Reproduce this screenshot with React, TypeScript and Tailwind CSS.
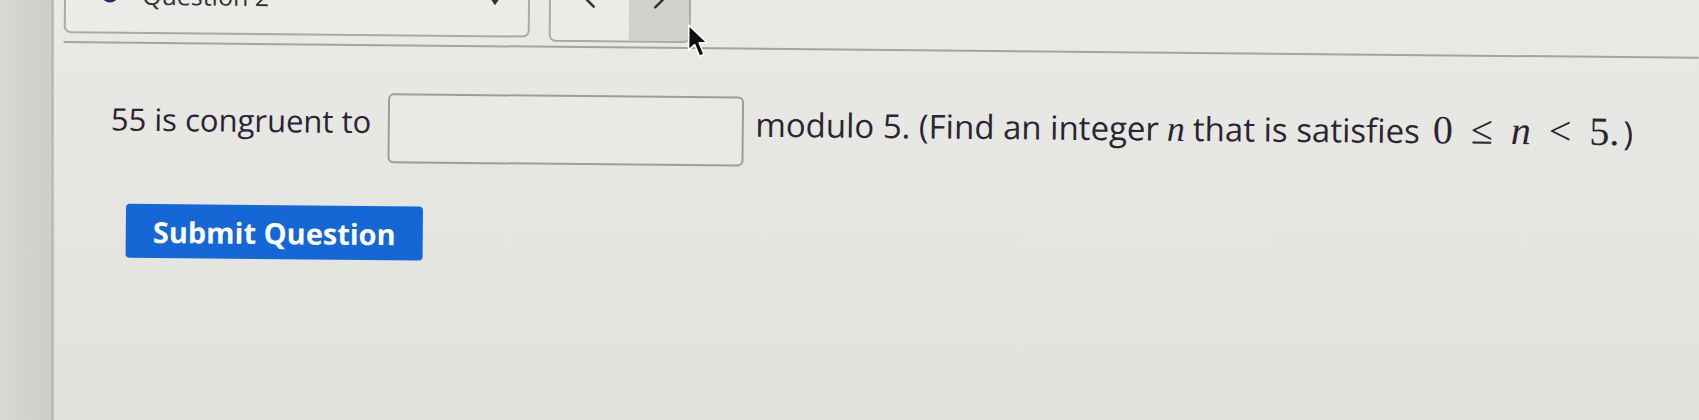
import React from "react";

function Cursor() {
  return (
    <svg width="24" height="36" viewBox="0 0 24 36" className="absolute left-[633px] top-[17px]">
      <path d="M2 2 L2 27 L8 21.5 L13 33 L17.5 31 L12.5 19.5 L20.5 19.5 Z" fill="#111" stroke="#fff" strokeWidth="1.6" strokeLinejoin="round" />
    </svg>
  );
}

export default function App() {
  return (
    <div className="flex h-[420px] w-[1699px] overflow-hidden bg-linear-to-b from-[#e9e9e5] to-[#e2e2dd] font-['Open_Sans',sans-serif] text-[#2a2433]">
      <div className="w-[54px] shrink-0 bg-linear-to-r from-[#d8d8d5] to-[#cdcdca] border-r-[3px] border-[#bcbcb8]" />
      <div className="relative flex-1 origin-top-left rotate-[0.55deg]">
        <div className="flex h-[41px] items-start">
          <div className="ml-[10px] -mt-[20px] flex h-[53px] w-[466px] items-start rounded-[7px] border-2 border-[#a9a9a5] bg-[#ebebe7] pl-[36px] pr-[26px] pt-[0px]">
            <span className="mt-[4px] h-[16px] w-[16px] rounded-full bg-[#1c2a6c]" />
            <span className="ml-[24px] text-[25px] leading-[24px] text-[#333]">Question 2</span>
            <svg width="14" height="12" viewBox="0 0 14 12" className="ml-auto mt-[9px]">
              <path d="M0 0 L14 0 L7 10 Z" fill="#333" />
            </svg>
          </div>
          <div className="ml-[19px] -mt-[20px] flex h-[57px] w-[142px] overflow-hidden rounded-[7px] border-2 border-[#a9a9a5]">
            <div className="flex w-[78px] justify-center bg-[#ebebe7]">
              <svg width="30" height="30" viewBox="0 0 24 24" fill="none" stroke="#333" strokeWidth="2" strokeLinecap="round" strokeLinejoin="round" className="-mt-[3px]">
                <path d="m15 18-6-6 6-6" />
              </svg>
            </div>
            <div className="flex flex-1 justify-center bg-[#d0d1cd]">
              <svg width="30" height="30" viewBox="0 0 24 24" fill="none" stroke="#333" strokeWidth="2" strokeLinecap="round" strokeLinejoin="round" className="-mt-[3px]">
                <path d="m9 18 6-6-6-6" />
              </svg>
            </div>
          </div>
        </div>
        <div className="ml-[10px] h-[2px] bg-[#a3a39f]" />

        <div className="mt-[47px] flex items-center pl-[58px] leading-[40px]">
          <span className="mb-[15px] whitespace-nowrap text-[31px] font-medium">55 is congruent to</span>
          <div className="ml-[17px] mr-[11px] h-[70px] w-[356px] shrink-0 rounded-[6px] border-2 border-[#9d9d9a] bg-[#e9e9e5]" />
          <span className="mb-[15px] flex items-baseline whitespace-nowrap text-[33px] font-medium">
            <span>modulo 5. (Find an integer</span>
            <span className="mx-[8px] font-['Liberation_Serif',serif] text-[36px] italic">n</span>
            <span>that is satisfies</span>
            <span className="ml-[13px] font-['Liberation_Serif',serif] text-[40px]">0</span>
            <span className="mx-[18px] font-['Liberation_Serif',serif] text-[40px]">≤</span>
            <span className="font-['Liberation_Serif',serif] text-[40px] italic">n</span>
            <span className="mx-[18px] font-['Liberation_Serif',serif] text-[40px]">&lt;</span>
            <span className="font-['Liberation_Serif',serif] text-[40px]">5.</span>
            <span className="ml-[4px]">)</span>
          </span>
        </div>

        <button className="ml-[74px] mt-[43px] flex h-[54px] w-[297px] items-center justify-center rounded-[4px] bg-[#1567d6] text-[29px] font-bold leading-none text-white">
          Submit Question
        </button>

        <Cursor />
      </div>
    </div>
  );
}
